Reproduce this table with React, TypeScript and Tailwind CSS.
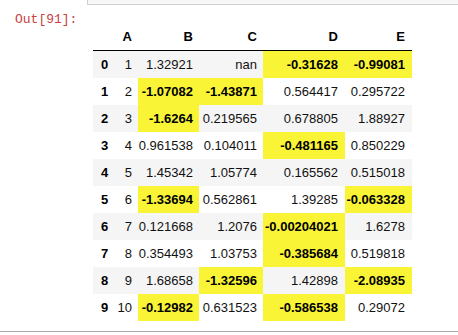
import React from 'react';

const rows: [number, string, string, string, string][] = [
  [1, '1.32921', 'nan', '-0.31628', '-0.99081'],
  [2, '-1.07082', '-1.43871', '0.564417', '0.295722'],
  [3, '-1.6264', '0.219565', '0.678805', '1.88927'],
  [4, '0.961538', '0.104011', '-0.481165', '0.850229'],
  [5, '1.45342', '1.05774', '0.165562', '0.515018'],
  [6, '-1.33694', '0.562861', '1.39285', '-0.063328'],
  [7, '0.121668', '1.2076', '-0.00204021', '1.6278'],
  [8, '0.354493', '1.03753', '-0.385684', '0.519818'],
  [9, '1.68658', '-1.32596', '1.42898', '-2.08935'],
  [10, '-0.12982', '0.631523', '-0.586538', '0.29072'],
];

// right padding per value column B..E
const valuePad = ['pr-[6px]', 'pr-[6px]', 'pr-[7px]', 'pr-[7px]'];

function ValueCell({ value, pad }: { value: string; pad: string }) {
  const neg = value.startsWith('-');
  return (
    <td className={`${pad} text-right ${neg ? 'bg-[#f9f536] font-bold text-black' : 'text-[#111]'}`}>
      {value}
    </td>
  );
}

export default function App() {
  return (
    <div className="relative w-[458px] h-[335px] overflow-hidden bg-white font-['Liberation_Sans',Arial,sans-serif]">
      <div className="ml-[87px] h-[5px] border-l border-b border-[#cfcfcf] bg-[#f7f7f7]" />

      <div className="flex">
        <div className="w-[93px] pl-[15px] pt-[7px] font-['Liberation_Mono',monospace] text-[13px] leading-[16px] text-[#c9403f]">
          Out[91]:
        </div>

        <table className="mt-[18px] table-fixed border-collapse text-[13px] leading-[27px]">
          <thead>
            <tr className="border-b border-black font-bold text-black">
              <th className="w-[19px] h-[27px] p-0"></th>
              <th className="w-[26px] pr-[6px] text-right">A</th>
              <th className="w-[61px] pr-[6px] text-right">B</th>
              <th className="w-[64px] pr-[6px] text-right">C</th>
              <th className="w-[82px] pr-[7px] text-right">D</th>
              <th className="w-[67px] pr-[7px] text-right">E</th>
            </tr>
          </thead>
          <tbody>
            {rows.map((r, i) => (
              <tr key={i} className={`h-[27px] ${i % 2 === 0 ? 'bg-[#f5f5f5]' : 'bg-white'}`}>
                <th className="pl-[8px] text-left font-bold text-black">{i}</th>
                <td className="pr-[6px] text-right text-[#111]">{r[0]}</td>
                {r.slice(1).map((v, j) => (
                  <ValueCell key={j} value={v as string} pad={valuePad[j]} />
                ))}
              </tr>
            ))}
          </tbody>
        </table>
      </div>

      <div className="mt-[10px] border-t border-[#ababab]" />
    </div>
  );
}
